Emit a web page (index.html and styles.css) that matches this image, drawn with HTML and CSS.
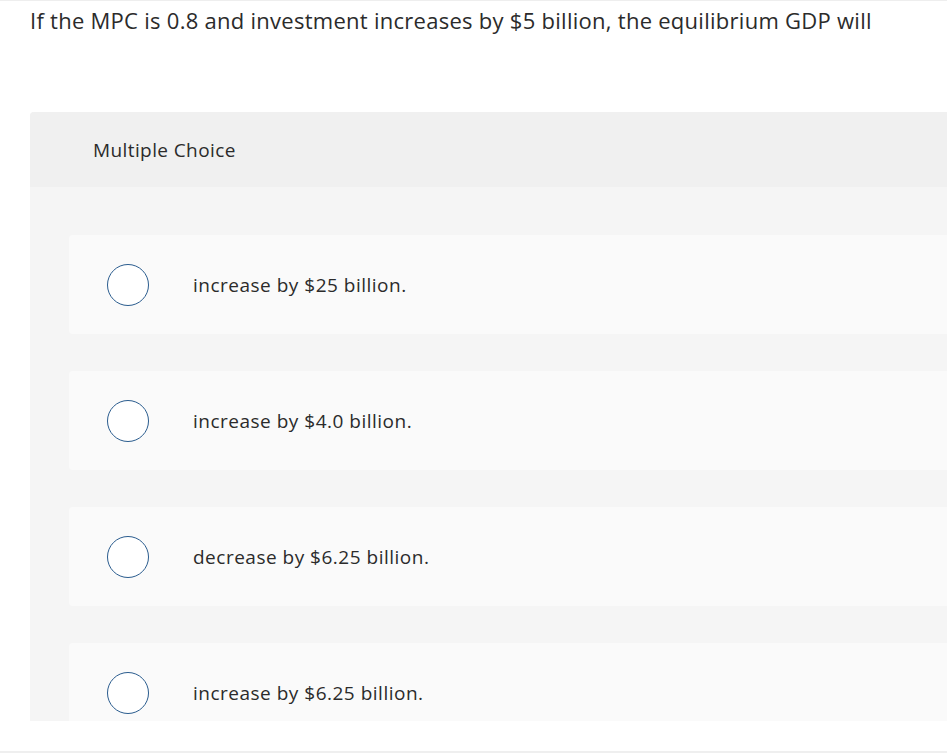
FILE: index.html
```html
<!DOCTYPE html>
<html lang="en">
<head>
<meta charset="utf-8">
<title>Multiple Choice</title>
<link rel="stylesheet" href="styles.css">
</head>
<body>
<div class="page">
  <p class="question">If the MPC is 0.8 and investment increases by $5 billion, the equilibrium GDP will</p>
  <section class="panel">
    <div class="panel-head">Multiple Choice</div>
    <div class="options">
      <label class="option"><span class="radio"></span><span class="label">increase by $25 billion.</span></label>
      <label class="option"><span class="radio"></span><span class="label">increase by $4.0 billion.</span></label>
      <label class="option"><span class="radio"></span><span class="label">decrease by $6.25 billion.</span></label>
      <label class="option"><span class="radio"></span><span class="label">increase by $6.25 billion.</span></label>
    </div>
  </section>
</div>
</body>
</html>
```
FILE: styles.css
```css
html, body {
  margin: 0;
  padding: 0;
  background: #ffffff;
}
body {
  font-family: "Open Sans", Lato, sans-serif;
  color: #2b2b2b;
}
.page {
  height: 750px;
  border-top: 1px solid #eeeeee;
  border-bottom: 2px solid #efefef;
  overflow: hidden;
}
.question {
  margin: 0;
  padding: 5px 0 0 30px;
  height: 111px;
  box-sizing: border-box;
  font-size: 22px;
  letter-spacing: 0.27px;
  line-height: 28px;
}
.panel {
  margin-left: 30px;
  height: 609px;
  overflow: hidden;
  background: #f5f5f5;
  border-radius: 4px 0 0 0;
}
.panel-head {
  height: 75px;
  background: #f0f0f0;
  display: flex;
  align-items: center;
  padding-left: 63px;
  font-size: 19px;
  letter-spacing: 0.4px;
}
.options {
  display: flex;
  flex-direction: column;
  gap: 37px;
  padding: 48px 0 0 39px;
}
.option {
  flex: none;
  height: 99px;
  background: #fafafa;
  border-radius: 4px 0 0 4px;
  display: flex;
  align-items: center;
  padding-left: 38px;
  font-size: 19px;
  letter-spacing: 0.5px;
}
.radio {
  width: 40px;
  height: 40px;
  border: 1.3px solid #2a5c8e;
  border-radius: 50%;
  background: #ffffff;
  flex: none;
}
.label {
  margin-left: 44px;
}
```
